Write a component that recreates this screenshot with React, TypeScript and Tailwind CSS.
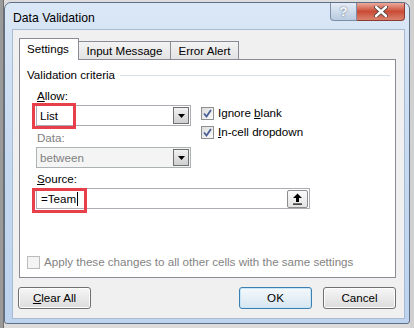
import { ReactNode } from "react";

const Check = ({ checked, disabled }: { checked?: boolean; disabled?: boolean }) => (
  <div
    className={`w-[13px] h-[13px] border flex items-center justify-center ${
      disabled
        ? "border-[#bcbcbc] bg-[#f4f4f4]"
        : "border-[#8e8f8f] bg-gradient-to-br from-[#dcdcdc] to-[#fbfbfb]"
    }`}
  >
    {checked && (
      <svg width="9" height="9" viewBox="0 0 9 9">
        <path d="M1 4.5 L3.5 7.5 L8 1" fill="none" stroke="#4a5f97" strokeWidth="1.8" />
      </svg>
    )}
  </div>
);

const Combo = ({ value, disabled }: { value: string; disabled?: boolean }) => (
  <div
    className={`w-[155px] h-[21px] border flex items-center ${
      disabled ? "border-[#adb2b5] bg-[#f4f4f4] text-[#808080]" : "border-[#abadb3] bg-white"
    }`}
  >
    <span className="pl-[3px]">{value}</span>
    <div className="ml-auto mr-[1px] w-[16px] h-[17px] border border-[#707070] bg-gradient-to-b from-[#f2f2f2] to-[#cfcfcf] flex items-center justify-center">
      <svg width="7" height="4" viewBox="0 0 7 4">
        <path d="M0 0 H7 L3.5 4 Z" fill="#000" />
      </svg>
    </div>
  </div>
);

const Btn = ({ children, primary }: { children: ReactNode; primary?: boolean }) => (
  <div
    className={`w-[73px] h-[22px] rounded-[3px] border flex items-center justify-center ${
      primary
        ? "border-[#3c7fb1] bg-gradient-to-b from-[#f4f9fc] to-[#d6e6f0] shadow-[inset_0_0_0_1px_#c6e6f7]"
        : "border-[#707070] bg-gradient-to-b from-[#f6f6f6] to-[#dcdcdc] shadow-[inset_0_0_0_1px_#fcfcfc]"
    }`}
  >
    {children}
  </div>
);

const RedBox = ({ className }: { className: string }) => (
  <div className={`absolute border-[3px] border-[#e8404a] pointer-events-none ${className}`} />
);

export default function App() {
  return (
    <div className="w-[414px] h-[328px] bg-[#dcdcdc] flex overflow-hidden font-['Liberation_Sans',Arial,sans-serif] text-[11.6px] leading-[14px] text-black">
      <div className="w-[4px] h-full bg-[#9a9a9a] border-r border-[#6f6f6f]" />
      <div className="mt-[2px] w-[406px] h-[322px] rounded-t-[7px] rounded-b-[3px] border border-[#5f6f86] bg-gradient-to-b from-[#dae7f6] via-[#c5d9f0] to-[#bdd3ee] flex flex-col pl-[7px] pr-[4px] pb-[4px]">
        {/* Title bar */}
        <div className="h-[26px] flex items-start">
          <span className="mt-[8px] ml-[1px] text-[12.2px] text-black">Data Validation</span>
          <div className="ml-auto flex h-[18px]">
            <div className="w-[27px] h-full rounded-bl-[4px] border border-t-0 border-[#7d8ea8] bg-gradient-to-b from-[#e4ecf6] to-[#b9cbe0] flex items-center justify-center text-[13px] font-bold text-[#fafafa] [text-shadow:0_0_2px_#4d5d77]">
              ?
            </div>
            <div className="w-[48px] h-full rounded-br-[4px] border border-t-0 border-l-0 border-[#8a3a30] bg-gradient-to-b from-[#e9a99c] via-[#c94a35] to-[#d9826e] flex items-center justify-center">
              <svg width="14" height="11" viewBox="0 0 14 11">
                <path d="M2 1 L12 10 M12 1 L2 10" stroke="#3b3b3b" strokeWidth="4" strokeLinecap="round" />
                <path d="M2 1 L12 10 M12 1 L2 10" stroke="#ffffff" strokeWidth="2.4" strokeLinecap="round" />
              </svg>
            </div>
          </div>
        </div>

        {/* Client area */}
        <div className="w-[393px] h-[290px] border border-[#a8bbd3] bg-[#f0f0f0] flex flex-col">
          {/* Tabs */}
          <div className="mt-[8px] ml-[6px] flex items-end h-[21px] relative z-10">
            <div className="w-[60px] h-[22px] -mb-[1px] border border-b-0 border-[#898c95] bg-white flex items-start pl-[7px] pt-[3px]">
              Settings
            </div>
            <div className="w-[92px] h-[18px] border border-b-0 border-l-0 border-[#898c95] bg-gradient-to-b from-[#f3f3f3] to-[#e3e3e3] flex items-center justify-center">
              Input Message
            </div>
            <div className="w-[68px] h-[18px] border border-b-0 border-l-0 border-[#898c95] bg-gradient-to-b from-[#f3f3f3] to-[#e3e3e3] flex items-center justify-center">
              Error Alert
            </div>
          </div>

          {/* Panel */}
          <div className="ml-[6px] w-[377px] h-[219px] border border-[#898c95] bg-white flex flex-col">
            <div className="mt-[8px] ml-[7px] mr-[5px] flex items-center">
              <span>Validation criteria</span>
              <div className="ml-[5px] flex-1 h-[1px] bg-[#d5dfe5]" />
            </div>

            <div className="ml-[16px] flex">
              <div className="flex flex-col">
                <span className="mt-[7px] ml-[1px]">
                  <u>A</u>llow:
                </span>
                <div className="relative mt-[2px]">
                  <Combo value="List" />
                  <RedBox className="-left-[4px] -top-[2px] w-[44px] h-[26px]" />
                </div>
                <span className="mt-[5px] ml-[1px] text-[#808080]">Data:</span>
                <div className="mt-[2px]">
                  <Combo value="between" disabled />
                </div>
              </div>
              <div className="ml-[10px] mt-[24px] flex flex-col gap-[5px]">
                <div className="flex items-center gap-[4px]">
                  <Check checked />
                  <span>
                    Ignore <u>b</u>lank
                  </span>
                </div>
                <div className="flex items-center gap-[4px]">
                  <Check checked />
                  <span>
                    <u>I</u>n-cell dropdown
                  </span>
                </div>
              </div>
            </div>

            <span className="mt-[4px] ml-[17px]">
              <u>S</u>ource:
            </span>
            <div className="relative mt-[2px] ml-[16px] w-[274px] h-[21px] border border-[#abadb3] bg-white flex items-center">
              <span className="pl-[4px]">=Team</span>
              <div className="w-[1px] h-[14px] bg-black ml-[1px]" />
              <div className="ml-auto mr-[1px] w-[21px] h-[18px] rounded-[2px] border border-[#8d8d8d] bg-gradient-to-b from-[#fbfbfb] to-[#e3e3e3] flex items-center justify-center">
                <svg width="11" height="12" viewBox="0 0 11 12">
                  <path d="M5.5 0.5 L10 5 H7 V9 H4 V5 H1 Z" fill="#000" />
                  <rect x="1" y="10.5" width="9" height="1.2" fill="#000" />
                </svg>
              </div>
              <RedBox className="-left-[5px] -top-[1px] w-[55px] h-[25px]" />
            </div>

            <div className="mt-auto mb-[8px] ml-[7px] flex items-center gap-[4px] text-[#838383]">
              <Check disabled />
              <span>Apply these changes to all other cells with the same settings</span>
            </div>
          </div>

          {/* Buttons */}
          <div className="mt-[9px] ml-[5px] mr-[8px] flex items-center">
            <Btn>
              <span>
                <u>C</u>lear All
              </span>
            </Btn>
            <div className="ml-auto flex gap-[11px]">
              <Btn primary>OK</Btn>
              <Btn>Cancel</Btn>
            </div>
          </div>
        </div>
      </div>
      <div className="flex-1 bg-[#d0d0d0]" />
    </div>
  );
}
